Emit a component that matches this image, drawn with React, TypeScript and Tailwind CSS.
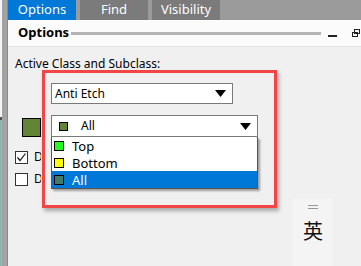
import { ReactNode } from 'react'

const FONT = "font-['Noto_Sans',sans-serif]"

function Arrow() {
  return (
    <svg width="11" height="7" viewBox="0 0 11 7" className="shrink-0">
      <polygon points="0,0 11,0 5.5,7" fill="#000" />
    </svg>
  )
}

function Swatch({ color, className = '' }: { color: string; className?: string }) {
  return <span className={`inline-block border border-black ${className}`} style={{ background: color }} />
}

function Combo({ children, className = '' }: { children: ReactNode; className?: string }) {
  return (
    <div className={`flex items-center justify-between border border-[#7a7a7a] bg-white pr-[6px] ${className}`}>
      <div className="flex items-center">{children}</div>
      <Arrow />
    </div>
  )
}

const ITEMS = [
  { label: 'Top', color: '#22ff22' },
  { label: 'Bottom', color: '#ffff00' },
  { label: 'All', color: '#3f7a6c', selected: true },
]

export default function App() {
  return (
    <div className={`relative flex h-[266px] w-[361px] overflow-hidden bg-[#f0f0f0] text-[12px] ${FONT}`}>
      {/* left edge of neighbouring window */}
      <div className="flex w-[8px] shrink-0">
        <div className="flex w-[2px] flex-col">
          <div className="h-[117px] bg-[#f4f4f4]" />
          <div className="h-[3px] bg-[#555]" />
          <div className="flex-1 bg-[#8fb5b1]" />
        </div>
        <div className="w-[5px] bg-[#a3a3a3]" />
        <div className="w-[1px] bg-[#8a8a8a]" />
      </div>

      <div className="flex flex-1 flex-col">
        {/* tabs */}
        <div className="flex h-[20px] gap-[4px] bg-[#9b9b9b] text-[13px] text-white">
          <div className="flex w-[68px] items-center justify-center bg-[#0078d7]">Options</div>
          <div className="flex w-[68px] items-center justify-center bg-[#7b7b7b]">Find</div>
          <div className="flex w-[68px] items-center justify-center bg-[#7b7b7b]">Visibility</div>
        </div>

        {/* title bar */}
        <div className="flex h-[27px] items-center border-b border-[#e2e2e2] bg-[#fbfbfb] pl-[10px]">
          <span className="text-[13px] font-bold text-black">Options</span>
          <div className="ml-[2px] h-[3px] w-[250px] bg-[#b4b4b4]" />
          <div className="ml-[7px] mt-[6px] h-[2px] w-[9px] bg-[#222]" />
          <svg width="8" height="8" viewBox="0 0 8 8" className="ml-[15px]">
            <rect x="0.5" y="3.5" width="5" height="4" fill="none" stroke="#222" />
            <rect x="2.5" y="0.5" width="5" height="4" fill="none" stroke="#222" />
          </svg>
        </div>

        {/* content */}
        <div className="relative flex-1 pl-[7px] pt-[9px] text-black">
          <div className="leading-[16px]">Active Class and Subclass:</div>
          <div className="ml-[7px] mt-[46px] h-[19px] w-[19px] border border-black bg-[#628436]" />
          <div className="mt-[12px] flex flex-col gap-[6px]">
            <div className="flex h-[16px] items-center gap-[6px]">
              <span className="flex h-[13px] w-[13px] items-center justify-center border border-[#333] bg-white">
                <svg width="11" height="11" viewBox="0 0 11 11">
                  <path d="M1.5 5.5 L4 8.5 L9.5 1.5" fill="none" stroke="#111" strokeWidth="1.2" />
                </svg>
              </span>
              <span className="w-[7px] overflow-hidden whitespace-nowrap">Display</span>
            </div>
            <div className="flex h-[16px] items-center gap-[6px]">
              <span className="h-[13px] w-[13px] border border-[#333] bg-white" />
              <span className="w-[7px] overflow-hidden whitespace-nowrap">Display</span>
            </div>
          </div>
        </div>
      </div>

      {/* red annotation box */}
      <div className="absolute left-[42px] top-[70px] h-[138px] w-[235px] border-[3px] border-[#f24646] bg-[#f0f0f0] shadow-[2px_3px_4px_rgba(0,0,0,0.3)]">
        <Combo className="ml-[6px] mt-[10px] h-[21px] w-[182px]">
          <span className="pl-[3px]">Anti Etch</span>
        </Combo>
        <Combo className="ml-[6px] mt-[11px] h-[22px] w-[207px]">
          <Swatch color="#628436" className="ml-[7px] h-[9px] w-[9px]" />
          <span className="ml-[13px]">All</span>
        </Combo>
        <div className="ml-[6px] w-[207px] border border-t-0 border-[#555] bg-white shadow-[2px_2px_2px_rgba(0,0,0,0.35)]">
          {ITEMS.map((it) => (
            <div
              key={it.label}
              className={`flex h-[17px] items-center ${it.selected ? 'bg-[#0078d7] text-white' : 'text-black'}`}
            >
              <Swatch color={it.color} className="ml-[2px] h-[10px] w-[10px]" />
              <span className="ml-[8px] text-[13px] leading-[16px]">{it.label}</span>
            </div>
          ))}
        </div>
      </div>

      {/* IME indicator */}
      <div className="absolute left-[293px] top-[199px] flex h-[67px] w-[40px] flex-col items-center bg-[#f4f4f4]">
        <div className="mt-[6px] flex w-[10px] flex-col gap-[2px]">
          <div className="h-[1px] bg-[#999]" />
          <div className="h-[1px] bg-[#999]" />
        </div>
        <div className="mt-[11px] font-['Noto_Sans_CJK_SC',sans-serif] text-[20px] leading-[22px] text-[#111]">英</div>
      </div>
    </div>
  )
}
